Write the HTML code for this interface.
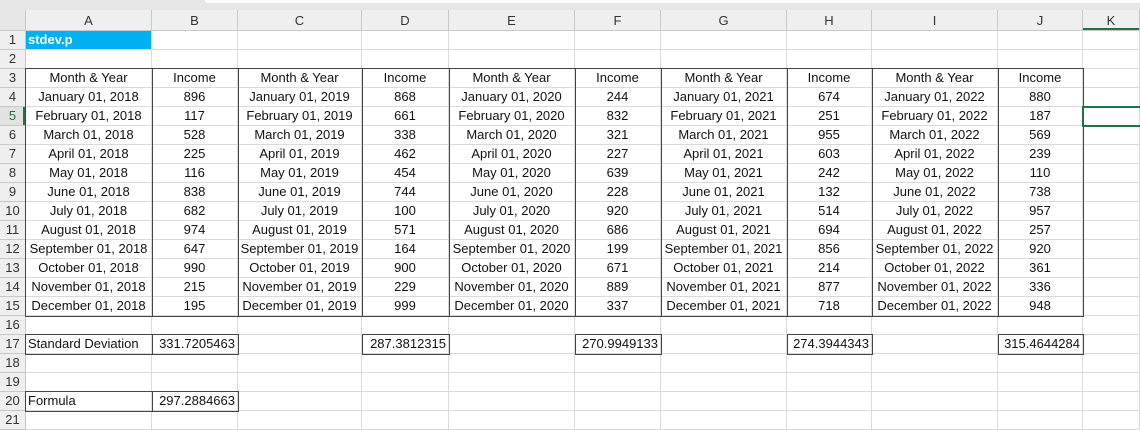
<!DOCTYPE html>
<html><head><meta charset="utf-8"><style>
body{margin:0;width:1140px;height:428px;overflow:hidden;background:#fff;font-family:"Liberation Sans",Arial,sans-serif;font-size:13px;color:#111;position:relative}
.strip{position:absolute;left:0;top:0;width:1140px;height:10px;background:#e6e6e6}
.strip .w{position:absolute;left:205px;top:0;right:0;height:3px;background:#fff;border-radius:0 0 0 4px}
table{position:absolute;left:0;top:10px;border-collapse:separate;border-spacing:0;table-layout:fixed;width:1140px}
td{height:19px;padding:0 2px;border-right:1px solid #dadada;border-bottom:1px solid #dadada;white-space:nowrap;overflow:hidden;text-align:center;line-height:18px;box-sizing:border-box}
tr.h td{background:#efefef;color:#333;border-color:#c8c8c8;height:21px;padding-top:2px}
td.rh{background:#efefef;color:#333;border-color:#c8c8c8;text-align:center;padding:0}
td.k{color:#217346;box-shadow:inset 0 -2px 0 #217346;background:#e2e2e2}
td.rs{color:#217346;box-shadow:inset -2px 0 0 #217346;background:#e2e2e2}
td.l{text-align:left}
td.r{text-align:right}
td.blue{background:#00b0f0;color:#fff;text-align:left;font-weight:bold}
.bx{position:absolute;border:1px solid #444;box-sizing:border-box;pointer-events:none}
.sel{position:absolute;border:2px solid #217346;box-sizing:border-box}
</style></head><body>
<div class="strip"><div class="w"></div></div>
<table>
<colgroup><col style="width:26px"><col style="width:126px"><col style="width:86px"><col style="width:124px"><col style="width:87px"><col style="width:126px"><col style="width:86px"><col style="width:126px"><col style="width:85px"><col style="width:126px"><col style="width:85px"><col style="width:57px"></colgroup>
<tr class="h"><td style="background:#e6e6e6"></td><td>A</td><td>B</td><td>C</td><td>D</td><td>E</td><td>F</td><td>G</td><td>H</td><td>I</td><td>J</td><td class="k">K</td></tr>
<tr><td class="rh">1</td><td class="blue">stdev.p</td><td></td><td></td><td></td><td></td><td></td><td></td><td></td><td></td><td></td><td></td></tr>
<tr><td class="rh">2</td><td></td><td></td><td></td><td></td><td></td><td></td><td></td><td></td><td></td><td></td><td></td></tr>
<tr><td class="rh">3</td><td>Month &amp; Year</td><td>Income</td><td>Month &amp; Year</td><td>Income</td><td>Month &amp; Year</td><td>Income</td><td>Month &amp; Year</td><td>Income</td><td>Month &amp; Year</td><td>Income</td><td></td></tr>
<tr><td class="rh">4</td><td>January 01, 2018</td><td>896</td><td>January 01, 2019</td><td>868</td><td>January 01, 2020</td><td>244</td><td>January 01, 2021</td><td>674</td><td>January 01, 2022</td><td>880</td><td></td></tr>
<tr><td class="rh rs">5</td><td>February 01, 2018</td><td>117</td><td>February 01, 2019</td><td>661</td><td>February 01, 2020</td><td>832</td><td>February 01, 2021</td><td>251</td><td>February 01, 2022</td><td>187</td><td></td></tr>
<tr><td class="rh">6</td><td>March 01, 2018</td><td>528</td><td>March 01, 2019</td><td>338</td><td>March 01, 2020</td><td>321</td><td>March 01, 2021</td><td>955</td><td>March 01, 2022</td><td>569</td><td></td></tr>
<tr><td class="rh">7</td><td>April 01, 2018</td><td>225</td><td>April 01, 2019</td><td>462</td><td>April 01, 2020</td><td>227</td><td>April 01, 2021</td><td>603</td><td>April 01, 2022</td><td>239</td><td></td></tr>
<tr><td class="rh">8</td><td>May 01, 2018</td><td>116</td><td>May 01, 2019</td><td>454</td><td>May 01, 2020</td><td>639</td><td>May 01, 2021</td><td>242</td><td>May 01, 2022</td><td>110</td><td></td></tr>
<tr><td class="rh">9</td><td>June 01, 2018</td><td>838</td><td>June 01, 2019</td><td>744</td><td>June 01, 2020</td><td>228</td><td>June 01, 2021</td><td>132</td><td>June 01, 2022</td><td>738</td><td></td></tr>
<tr><td class="rh">10</td><td>July 01, 2018</td><td>682</td><td>July 01, 2019</td><td>100</td><td>July 01, 2020</td><td>920</td><td>July 01, 2021</td><td>514</td><td>July 01, 2022</td><td>957</td><td></td></tr>
<tr><td class="rh">11</td><td>August 01, 2018</td><td>974</td><td>August 01, 2019</td><td>571</td><td>August 01, 2020</td><td>686</td><td>August 01, 2021</td><td>694</td><td>August 01, 2022</td><td>257</td><td></td></tr>
<tr><td class="rh">12</td><td>September 01, 2018</td><td>647</td><td>September 01, 2019</td><td>164</td><td>September 01, 2020</td><td>199</td><td>September 01, 2021</td><td>856</td><td>September 01, 2022</td><td>920</td><td></td></tr>
<tr><td class="rh">13</td><td>October 01, 2018</td><td>990</td><td>October 01, 2019</td><td>900</td><td>October 01, 2020</td><td>671</td><td>October 01, 2021</td><td>214</td><td>October 01, 2022</td><td>361</td><td></td></tr>
<tr><td class="rh">14</td><td>November 01, 2018</td><td>215</td><td>November 01, 2019</td><td>229</td><td>November 01, 2020</td><td>889</td><td>November 01, 2021</td><td>877</td><td>November 01, 2022</td><td>336</td><td></td></tr>
<tr><td class="rh">15</td><td>December 01, 2018</td><td>195</td><td>December 01, 2019</td><td>999</td><td>December 01, 2020</td><td>337</td><td>December 01, 2021</td><td>718</td><td>December 01, 2022</td><td>948</td><td></td></tr>
<tr><td class="rh">16</td><td></td><td></td><td></td><td></td><td></td><td></td><td></td><td></td><td></td><td></td><td></td></tr>
<tr><td class="rh">17</td><td class="l">Standard Deviation</td><td class="r">331.7205463</td><td></td><td class="r">287.3812315</td><td></td><td class="r">270.9949133</td><td></td><td class="r">274.3944343</td><td></td><td class="r">315.4644284</td><td></td></tr>
<tr><td class="rh">18</td><td></td><td></td><td></td><td></td><td></td><td></td><td></td><td></td><td></td><td></td><td></td></tr>
<tr><td class="rh">19</td><td></td><td></td><td></td><td></td><td></td><td></td><td></td><td></td><td></td><td></td><td></td></tr>
<tr><td class="rh">20</td><td class="l">Formula</td><td class="r">297.2884663</td><td></td><td></td><td></td><td></td><td></td><td></td><td></td><td></td><td></td></tr>
<tr><td class="rh">21</td><td></td><td></td><td></td><td></td><td></td><td></td><td></td><td></td><td></td><td></td><td></td></tr>
</table>
<div class="bx" style="left:25px;top:68px;width:128px;height:249px"></div>
<div class="bx" style="left:152px;top:68px;width:87px;height:249px"></div>
<div class="bx" style="left:238px;top:68px;width:125px;height:249px"></div>
<div class="bx" style="left:362px;top:68px;width:88px;height:249px"></div>
<div class="bx" style="left:449px;top:68px;width:127px;height:249px"></div>
<div class="bx" style="left:575px;top:68px;width:87px;height:249px"></div>
<div class="bx" style="left:661px;top:68px;width:127px;height:249px"></div>
<div class="bx" style="left:787px;top:68px;width:86px;height:249px"></div>
<div class="bx" style="left:872px;top:68px;width:127px;height:249px"></div>
<div class="bx" style="left:998px;top:68px;width:86px;height:249px"></div>
<div class="bx" style="left:25px;top:334px;width:128px;height:21px"></div>
<div class="bx" style="left:152px;top:334px;width:87px;height:21px"></div>
<div class="bx" style="left:362px;top:334px;width:88px;height:21px"></div>
<div class="bx" style="left:575px;top:334px;width:87px;height:21px"></div>
<div class="bx" style="left:787px;top:334px;width:86px;height:21px"></div>
<div class="bx" style="left:998px;top:334px;width:86px;height:21px"></div>
<div class="bx" style="left:25px;top:391px;width:128px;height:21px"></div>
<div class="bx" style="left:152px;top:391px;width:87px;height:21px"></div>
<div class="sel" style="left:1082px;top:106px;width:60px;height:21px"></div>
</body></html>
